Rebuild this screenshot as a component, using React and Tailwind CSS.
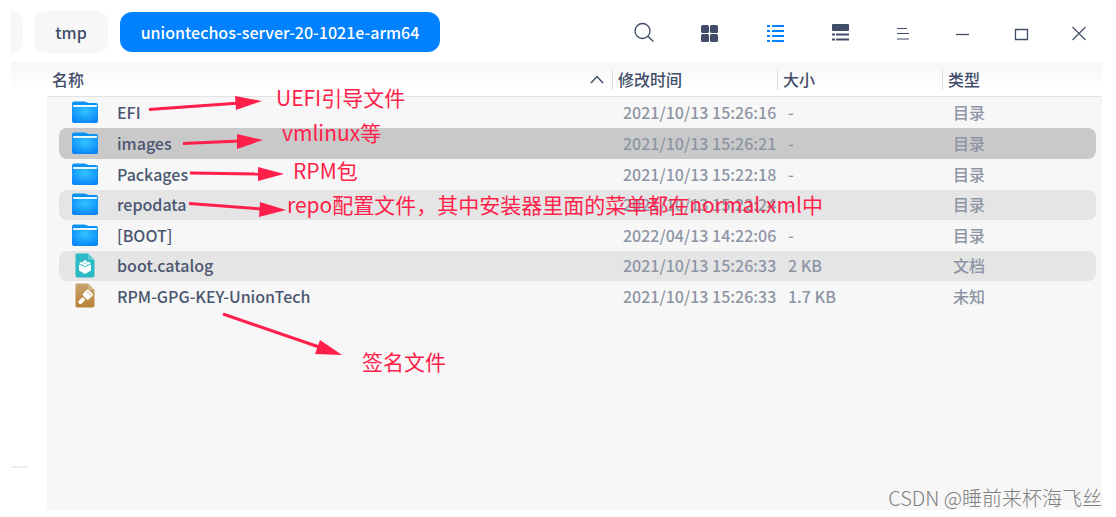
import clsx from "clsx";

const files = [
  { name: "EFI", type: "目录", date: "2021/10/13 15:26:16", size: "-", icon: "folder" },
  { name: "images", type: "目录", date: "2021/10/13 15:26:21", size: "-", icon: "folder", selected: true },
  { name: "Packages", type: "目录", date: "2021/10/13 15:22:18", size: "-", icon: "folder" },
  { name: "repodata", type: "目录", date: "2021/10/13 15:22:24", size: "-", icon: "folder", striped: true },
  { name: "[BOOT]", type: "目录", date: "2022/04/13 14:22:06", size: "-", icon: "folder" },
  { name: "boot.catalog", type: "文档", date: "2021/10/13 15:26:33", size: "2 KB", icon: "catalog", striped: true },
  { name: "RPM-GPG-KEY-UnionTech", type: "未知", date: "2021/10/13 15:26:33", size: "1.7 KB", icon: "key" },
];

const arrows = [
  { line: "M149 109.5 L240 103", head: "235,96 262,101 236,110" },
  { line: "M183 143.5 L240 141", head: "237,134 263,140 237,149" },
  { line: "M190 173 L262 174", head: "258,167 284,174 258,181" },
  { line: "M189 203.5 L262 209", head: "260,202 286,210 259,217" },
  { line: "M223 314 L322 348", head: "320,340 342,355 315,354" },
];

const FolderIcon = () => (
  <svg width="26" height="22" viewBox="0 0 26 22" className="block">
    <defs>
      <radialGradient id="folder" cx="0.5" cy="0.35" r="0.7">
        <stop offset="0" stopColor="#31c4ff" />
        <stop offset="1" stopColor="#0884f8" />
      </radialGradient>
    </defs>
    <path d="M0 2.500Q0 .5 2 .5H12Q13.500 .5 14.500 1.200L17 2H24Q26 2 26 4V12H0Z" fill="#0a93f5" />
    <path d="M1 4H25V8H1Z" fill="#e4f7ff" />
    <path d="M0 4L1.500 6H24.500L26 4V20Q26 22 24 22H2Q0 22 0 20Z" fill="url(#folder)" />
  </svg>
);

const CatalogIcon = () => (
  <svg width="20" height="25" viewBox="0 0 20 25" className="block">
    <path d="M2 .5H13L19.500 7V22.500Q19.500 24.500 17.500 24.500H2Q.5 24.500 .5 22.500V2Q.5 .5 2 .5Z" fill="#2bb9c5" />
    <path d="M13 .5L19.500 7H14.500Q13 7 13 5.500Z" fill="#5fcbd3" />
    <path d="M4 11.500L10 14.300L16 11.500V17.500L10 21L4 17.500Z" fill="#fff" />
    <path d="M4.500 10.500L10 8L15.500 10.500L10 13Z" fill="#a5e2e6" />
    <ellipse cx="10" cy="8.500" rx="1.800" ry="1.200" fill="#fff" />
    <ellipse cx="6.500" cy="10.300" rx="1.800" ry="1.200" fill="#fff" />
    <ellipse cx="13.500" cy="10.300" rx="1.800" ry="1.200" fill="#fff" />
    <ellipse cx="10" cy="12" rx="1.800" ry="1.200" fill="#fff" />
  </svg>
);

const KeyIcon = () => (
  <svg width="20" height="25" viewBox="0 0 20 25" className="block">
    <defs>
      <linearGradient id="key" x1="0" y1="0" x2="0" y2="1">
        <stop offset="0" stopColor="#c6a26d" />
        <stop offset="1" stopColor="#b98335" />
      </linearGradient>
    </defs>
    <path d="M2 .5H13L19.500 7V22.500Q19.500 24.500 17.500 24.500H2Q.5 24.500 .5 22.500V2Q.5 .5 2 .5Z" fill="url(#key)" />
    <path d="M13 .5L19.500 7H14.500Q13 7 13 5.500Z" fill="#d0b284" />
    <g transform="rotate(45 10 14.500)" fill="#fff">
      <rect x="6" y="6.500" width="8" height="8" rx="1.500" />
      <rect x="8" y="15.500" width="4" height="7.500" rx="2" />
    </g>
    <circle cx="13" cy="9.500" r=".8" fill="#c09553" />
    <circle cx="15" cy="11.500" r=".8" fill="#c09553" />
  </svg>
);

const FileIcon = ({ kind }) => {
  if (kind === "folder") return <FolderIcon />;
  if (kind === "catalog") return <CatalogIcon />;
  return <KeyIcon />;
};

const ToolButton = ({ label, className, children }) => (
  <button
    type="button"
    aria-label={label}
    className={clsx("flex h-5 w-5 items-center justify-center", className || "text-[#414d68]")}
  >
    <svg width="20" height="20" viewBox="0 0 20 20" fill="none" stroke="currentColor" className="overflow-visible">
      {children}
    </svg>
  </button>
);

const Toolbar = () => (
  <header className="mb-2 flex h-11 items-center justify-between pr-[13px]">
    <nav className="flex items-center">
      <span className="mr-[11px] h-[42px] w-3 rounded-r-xl bg-[#f7f7f7]"></span>
      <button
        type="button"
        className="mr-3 h-[42px] w-[74px] rounded-xl bg-[#f7f7f7] text-base font-medium text-[#414d68]"
      >
        tmp
      </button>
      <button
        type="button"
        className="h-10 w-80 rounded-xl bg-[#0081ff] text-base font-medium whitespace-nowrap text-white"
      >
        uniontechos-server-20-1021e-arm64
      </button>
    </nav>

    <div className="flex items-center gap-[41px]">
      <div className="flex gap-[46px]">
        <ToolButton label="搜索">
          <circle cx="9.500" cy="9" r="7.500" strokeWidth="1.300" />
          <path d="M15 14.500L20.500 19.500" strokeWidth="1.500" />
        </ToolButton>
        <ToolButton label="图标视图">
          <g fill="currentColor" stroke="none">
            <rect x="2" y="3" width="8" height="8" rx="1.500" />
            <rect x="11" y="3" width="8" height="8" rx="1.500" />
            <rect x="2" y="12" width="8" height="8" rx="1.500" />
            <rect x="11" y="12" width="8" height="8" rx="1.500" />
          </g>
        </ToolButton>
        <ToolButton label="列表视图" className="text-[#0081ff]">
          <path d="M2 4H5M7 4H19M2 9H5M7 9H19M2 14H5M7 14H19M2 19H5M7 19H19" strokeWidth="2" />
        </ToolButton>
        <ToolButton label="分栏视图">
          <rect x="1" y="2" width="17" height="7" rx="1" fill="currentColor" stroke="none" />
          <path d="M1 12.500H4M5 12.500H18M1 17.500H4M5 17.500H18" strokeWidth="2" />
        </ToolButton>
      </div>
      <div className="flex gap-[39px]">
        <ToolButton label="菜单">
          <path d="M5 6.500H15M5 11.500H17M5 17H17" strokeWidth="1.200" />
        </ToolButton>
        <ToolButton label="最小化">
          <path d="M5 12.500H18" strokeWidth="1.300" />
        </ToolButton>
        <ToolButton label="最大化">
          <path d="M5.500 7.500H17.500V17.500H5.500Z" strokeWidth="1.300" />
        </ToolButton>
        <ToolButton label="关闭">
          <path d="M3.500 5L16.500 18M16.500 5L3.500 18" strokeWidth="1.100" />
        </ToolButton>
      </div>
    </div>
  </header>
);

const HeadCell = ({ children, colSpan, first }) => (
  <th
    colSpan={colSpan}
    className="border-b border-[#e3e3e3] bg-linear-to-b from-[#f6f6f6] to-white to-80% p-0 text-left font-medium"
  >
    <div
      className={clsx(
        "flex h-[21px] items-center justify-between",
        first ? "pr-2 pl-[5px]" : "border-l border-[#dcdcdc] pl-[5px]"
      )}
    >
      {children}
    </div>
  </th>
);

const FileTable = () => (
  <table className="w-full table-fixed border-separate border-spacing-0 text-base leading-5 font-medium">
    <colgroup>
      <col className="w-3" />
      <col />
      <col className="w-[165px]" />
      <col className="w-[165px]" />
      <col className="w-[154px]" />
      <col className="w-[6px]" />
    </colgroup>
    <thead>
      <tr className="h-[35px] text-[#414d68]">
        <HeadCell colSpan={2} first>
          名称
          <svg width="14" height="9" viewBox="0 0 14 9" fill="none" stroke="currentColor" strokeWidth="1.400">
            <path d="M1 8L7 1.500L13 8" />
          </svg>
        </HeadCell>
        <HeadCell>修改时间</HeadCell>
        <HeadCell>大小</HeadCell>
        <HeadCell colSpan={2}>类型</HeadCell>
      </tr>
    </thead>
    <tbody>
      {files.map((file) => {
        const bg = file.selected ? "bg-[#c9c9c9]" : file.striped ? "bg-[#e5e5e5]" : "";
        return (
          <tr key={file.name} className={clsx("text-[#8d95a5]", file.striped ? "h-[30px]" : "h-[31px]")}>
            <td className="p-0"></td>
            <td className={clsx("rounded-l-lg p-0 pb-0.5", bg)}>
              <div className="flex items-center">
                <span className="flex w-[58px] pl-[13px]">
                  <span className="flex w-[26px] justify-center">
                    <FileIcon kind={file.icon} />
                  </span>
                </span>
                <span className="text-[#4b5670]">{file.name}</span>
              </div>
            </td>
            <td className={clsx("p-0 pb-0.5 pl-[11px] whitespace-nowrap", bg)}>{file.date}</td>
            <td className={clsx("p-0 pb-0.5 pl-[11px]", bg)}>{file.size}</td>
            <td className={clsx("rounded-r-lg p-0 pb-0.5 pl-[11px]", bg)}>{file.type}</td>
            <td className="p-0"></td>
          </tr>
        );
      })}
    </tbody>
  </table>
);

// Hand-placed notes that sit on top of the file list
const Annotations = () => (
  <div className="pointer-events-none absolute inset-0 text-[21px] leading-7 whitespace-nowrap text-[#ff1f4b]">
    <svg width="360" height="370" viewBox="0 0 360 370" className="absolute top-0 left-0">
      {arrows.map((arrow) => (
        <g key={arrow.line}>
          <path d={arrow.line} stroke="#ff1f4b" strokeWidth="3" />
          <polygon points={arrow.head} fill="#ff1f4b" />
        </g>
      ))}
    </svg>
    <span className="absolute top-[83px] left-[276px]">UEFI引导文件</span>
    <span className="absolute top-[118px] left-[282px]">vmlinux等</span>
    <span className="absolute top-[156px] left-[293px]">RPM包</span>
    <span className="absolute top-[190px] left-[287px]">repo配置文件，其中安装器里面的菜单都在normal.xml中</span>
    <span className="absolute top-[347px] left-[362px]">签名文件</span>
  </div>
);

export default function App() {
  return (
    <div className="relative flex min-h-screen flex-col bg-white pt-[10px] pr-[14px] pb-[7px] pl-[11px] font-['Noto_Sans_CJK_SC',sans-serif]">
      <Toolbar />
      <div className="flex flex-1">
        <aside className="flex w-9 flex-col justify-between pb-[42px]">
          <div className="h-[35px] bg-linear-to-b from-[#f6f6f6] to-white to-80%"></div>
          <div className="h-[2px] w-[17px] bg-[#eeeeee]"></div>
        </aside>
        <main className="min-w-0 flex-1 bg-[#f7f7f7]">
          <FileTable />
        </main>
      </div>
      <Annotations />
      <div className="absolute right-[14px] bottom-[5px] text-xl leading-7 font-light text-[#808080]">
        CSDN @睡前来杯海飞丝
      </div>
    </div>
  );
}
